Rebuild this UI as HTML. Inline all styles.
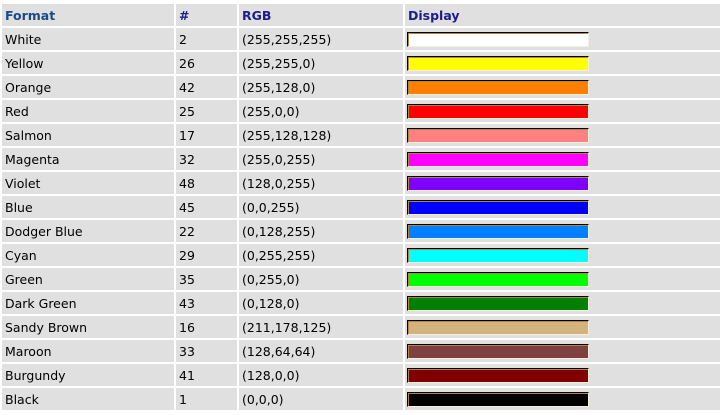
<!DOCTYPE html>
<html><head><style>
body{margin:0;background:#fff;font-family:"DejaVu Sans","Liberation Sans",sans-serif;font-size:12.5px;color:#000}
table{position:absolute;left:0px;top:2px;border-spacing:2px;border-collapse:separate}
td{background:#e0e0e0;height:22px;padding:0 0 0 3px;vertical-align:middle;white-space:nowrap}
th{background:#e0e0e0;height:22px;padding:0 0 0 3px;text-align:left;color:#1c1c8c;font-weight:bold;font-size:12.5px}
th.f{color:#1a4a8a}
.s{width:180px;height:13px;border:1px solid;border-color:#000 #f4f0e0 #f4f0e0 #000;box-shadow:inset 1px 1px 0 #b08838;margin-left:-1px}
</style></head><body>
<table>
<tr><th class="f" style="width:169px">Format</th><th style="width:58px">#</th><th style="width:161px">RGB</th><th style="width:312px">Display</th></tr>
<tr><td>White</td><td>2</td><td>(255,255,255)</td><td><div class="s" style="background:#fff"></div></td></tr>
<tr><td>Yellow</td><td>26</td><td>(255,255,0)</td><td><div class="s" style="background:#ff0"></div></td></tr>
<tr><td>Orange</td><td>42</td><td>(255,128,0)</td><td><div class="s" style="background:#ff8000"></div></td></tr>
<tr><td>Red</td><td>25</td><td>(255,0,0)</td><td><div class="s" style="background:#f00"></div></td></tr>
<tr><td>Salmon</td><td>17</td><td>(255,128,128)</td><td><div class="s" style="background:#ff8080"></div></td></tr>
<tr><td>Magenta</td><td>32</td><td>(255,0,255)</td><td><div class="s" style="background:#f0f"></div></td></tr>
<tr><td>Violet</td><td>48</td><td>(128,0,255)</td><td><div class="s" style="background:#8000ff"></div></td></tr>
<tr><td>Blue</td><td>45</td><td>(0,0,255)</td><td><div class="s" style="background:#00f"></div></td></tr>
<tr><td>Dodger Blue</td><td>22</td><td>(0,128,255)</td><td><div class="s" style="background:#0080ff"></div></td></tr>
<tr><td>Cyan</td><td>29</td><td>(0,255,255)</td><td><div class="s" style="background:#0ff"></div></td></tr>
<tr><td>Green</td><td>35</td><td>(0,255,0)</td><td><div class="s" style="background:#0f0"></div></td></tr>
<tr><td>Dark Green</td><td>43</td><td>(0,128,0)</td><td><div class="s" style="background:#008000"></div></td></tr>
<tr><td>Sandy Brown</td><td>16</td><td>(211,178,125)</td><td><div class="s" style="background:#d3b27d"></div></td></tr>
<tr><td>Maroon</td><td>33</td><td>(128,64,64)</td><td><div class="s" style="background:#804040"></div></td></tr>
<tr><td>Burgundy</td><td>41</td><td>(128,0,0)</td><td><div class="s" style="background:#800000"></div></td></tr>
<tr><td>Black</td><td>1</td><td>(0,0,0)</td><td><div class="s" style="background:#000"></div></td></tr>
</table>
</body></html>
